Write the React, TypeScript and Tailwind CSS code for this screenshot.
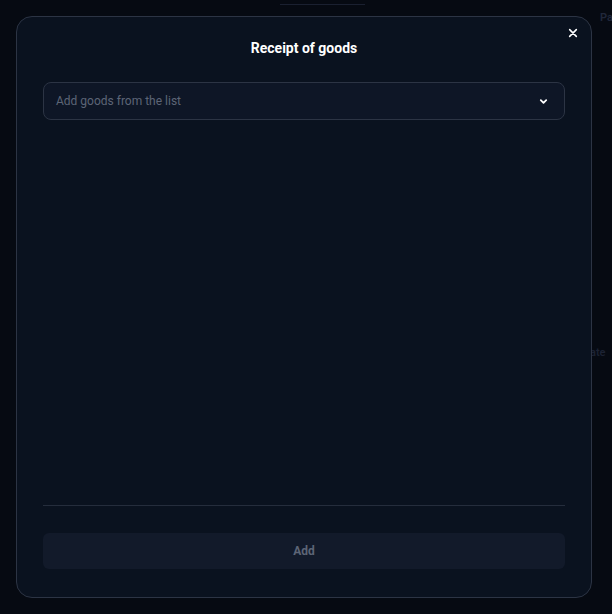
export default function App() {
  return (
    <div
      className="relative h-[614px] w-[612px] overflow-hidden bg-[#060a12] p-4"
      style={{ fontFamily: "Roboto, 'Noto Sans', sans-serif" }}
    >
      {/* faint page content under the overlay */}
      <div className="absolute left-[280px] top-[4px] h-px w-[85px] bg-[#1a2030]" />
      <div className="absolute left-[600px] top-[10px] text-[11px] font-semibold text-[#20273a]">Pa</div>
      <div className="absolute left-[590px] top-[345px] text-[11px] font-semibold text-[#1c2233]">ate</div>

      <div className="relative flex h-[582px] w-[576px] flex-col rounded-2xl border border-[#2c3444] bg-[#0a121f] px-[26px] pb-[28px] pt-[21px]">
        <button className="absolute right-[8px] top-[6px] flex h-5 w-5 items-center justify-center text-white">
          <svg width="10" height="10" viewBox="0 0 12 12" fill="none" stroke="currentColor" strokeWidth="1.9" strokeLinecap="round">
            <path d="M2 2l8 8M10 2l-8 8" />
          </svg>
        </button>

        <h2 className="text-center text-[14px] font-bold leading-5 text-white">Receipt of goods</h2>

        <div className="mt-6 flex h-[38px] items-center justify-between rounded-lg border border-[#2c3444] bg-[#0e1626] pl-3 pr-4">
          <span className="text-[12px] text-[#5d6576]">Add goods from the list</span>
          <svg width="9" height="9" viewBox="0 0 10 10" fill="none" stroke="white" strokeWidth="2" strokeLinecap="round" strokeLinejoin="round">
            <path d="M2 3.5l3 3 3-3" />
          </svg>
        </div>

        <div className="flex-1" />

        <div className="h-px w-full bg-[#252d3c]" />

        <button className="mt-[27px] flex h-9 w-full items-center justify-center rounded-md bg-[#121a2a] text-[12px] font-bold text-[#5d6576]">
          Add
        </button>
      </div>
    </div>
  );
}
